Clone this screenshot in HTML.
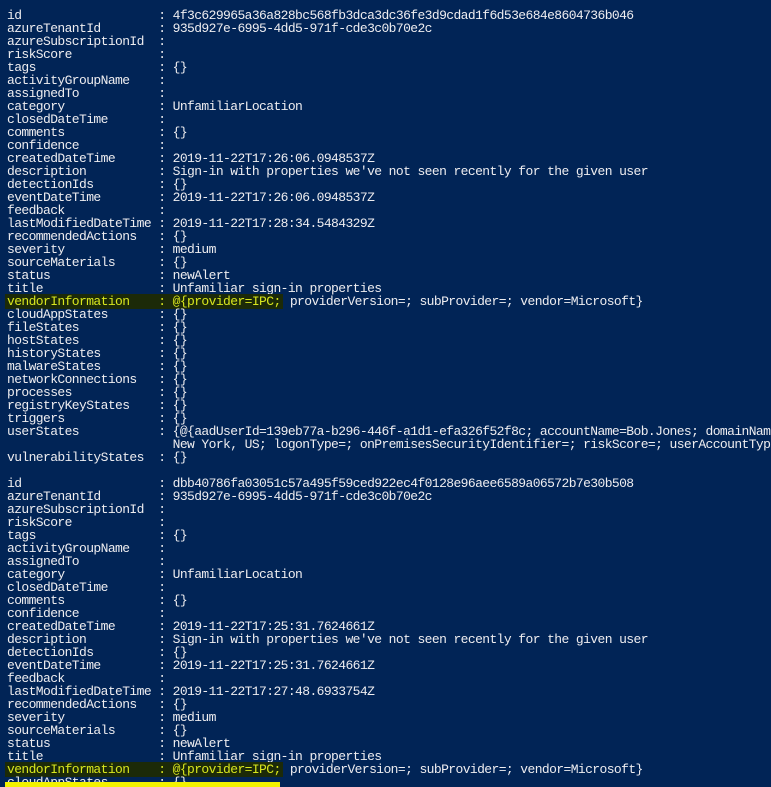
<!DOCTYPE html>
<html><head><style>
html,body{margin:0;padding:0;background:#012456;width:771px;height:787px;overflow:hidden}
pre{margin:0;padding:9px 0 0 7px;font-family:"Liberation Mono",monospace;font-size:13px;letter-spacing:-0.6px;line-height:13px;color:#eeedf0;white-space:pre}
.h{background:#1c2a08;color:#d8e61e;margin-left:-2px;padding:0 2px}
.y{position:absolute;left:5px;top:782px;width:275px;height:5px;background:#f2f200}
</style></head><body><pre>id                   : 4f3c629965a36a828bc568fb3dca3dc36fe3d9cdad1f6d53e684e8604736b046
azureTenantId        : 935d927e-6995-4dd5-971f-cde3c0b70e2c
azureSubscriptionId  :
riskScore            :
tags                 : {}
activityGroupName    :
assignedTo           :
category             : UnfamiliarLocation
closedDateTime       :
comments             : {}
confidence           :
createdDateTime      : 2019-11-22T17:26:06.0948537Z
description          : Sign-in with properties we've not seen recently for the given user
detectionIds         : {}
eventDateTime        : 2019-11-22T17:26:06.0948537Z
feedback             :
lastModifiedDateTime : 2019-11-22T17:28:34.5484329Z
recommendedActions   : {}
severity             : medium
sourceMaterials      : {}
status               : newAlert
title                : Unfamiliar sign-in properties
<span class="h">vendorInformation    : @{provider=IPC;</span> providerVersion=; subProvider=; vendor=Microsoft}
cloudAppStates       : {}
fileStates           : {}
hostStates           : {}
historyStates        : {}
malwareStates        : {}
networkConnections   : {}
processes            : {}
registryKeyStates    : {}
triggers             : {}
userStates           : {@{aadUserId=139eb77a-b296-446f-a1d1-efa326f52f8c; accountName=Bob.Jones; domainName=
                       New York, US; logonType=; onPremisesSecurityIdentifier=; riskScore=; userAccountType=
vulnerabilityStates  : {}

id                   : dbb40786fa03051c57a495f59ced922ec4f0128e96aee6589a06572b7e30b508
azureTenantId        : 935d927e-6995-4dd5-971f-cde3c0b70e2c
azureSubscriptionId  :
riskScore            :
tags                 : {}
activityGroupName    :
assignedTo           :
category             : UnfamiliarLocation
closedDateTime       :
comments             : {}
confidence           :
createdDateTime      : 2019-11-22T17:25:31.7624661Z
description          : Sign-in with properties we've not seen recently for the given user
detectionIds         : {}
eventDateTime        : 2019-11-22T17:25:31.7624661Z
feedback             :
lastModifiedDateTime : 2019-11-22T17:27:48.6933754Z
recommendedActions   : {}
severity             : medium
sourceMaterials      : {}
status               : newAlert
title                : Unfamiliar sign-in properties
<span class="h">vendorInformation    : @{provider=IPC;</span> providerVersion=; subProvider=; vendor=Microsoft}
cloudAppStates       : {}
</pre><div class="y"></div></body></html>
